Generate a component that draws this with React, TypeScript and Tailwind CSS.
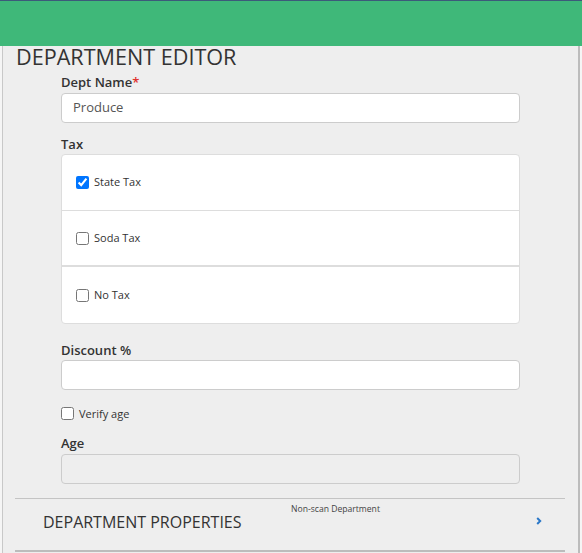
import React from "react";

type TaxOption = { name: string; checked: boolean };

const taxes: TaxOption[] = [
  { name: "State Tax", checked: true },
  { name: "Soda Tax", checked: false },
  { name: "No Tax", checked: false },
];

const labelCls = "block text-[13px] leading-[18px] font-semibold text-[#333]";

export default function App() {
  return (
    <div
      className="flex h-[553px] w-[582px] flex-col overflow-hidden bg-[#f5f5f5]"
      style={{ fontFamily: '"Open Sans", "Liberation Sans", sans-serif' }}
    >
      <div className="h-[46px] shrink-0 border-t border-[#3c5a7a] bg-[#3fb879]" />

      <div className="flex flex-1 px-[2px]">
        <div className="flex-1 border-l border-r-2 border-l-[#c8c8c8] border-r-[#bcbcbc] bg-[#eeeeee]">
          <h1 className="pl-[13px] text-[21.6px] font-normal leading-[22px] text-[#333]">
            DEPARTMENT EDITOR
          </h1>

          <div className="w-[517px] pl-[58px]">
            <label className={`${labelCls} mt-[5px]`}>
              Dept Name<span className="text-[#e0312c]">*</span>
            </label>
            <div className="mt-[2px] flex h-[30px] items-center rounded border border-[#cccccc] bg-white pl-[11px] text-[13px] text-[#555]">
              Produce
            </div>

            <label className={`${labelCls} mt-[12px]`}>Tax</label>
            <div className="mt-[1px] rounded border border-[#dddddd] bg-white">
              {taxes.map((t, i) => (
                <div
                  key={t.name}
                  className={`flex h-[56px] items-center gap-[5px] pl-[14px] ${
                    i === 0
                      ? "border-b border-[#dddddd]"
                      : i === 1
                        ? "border-b-2 border-[#dddddd]"
                        : ""
                  }`}
                >
                  <input
                    type="checkbox"
                    defaultChecked={t.checked}
                    className="m-0 h-[13px] w-[13px]"
                  />
                  <span className="text-[11px] text-[#333]">{t.name}</span>
                </div>
              ))}
            </div>

            <label className={`${labelCls} mt-[17px]`}>Discount %</label>
            <div className="mt-[1px] h-[30px] rounded border border-[#cccccc] bg-white" />

            <div className="mt-[17px] flex h-[13px] items-center gap-[5px]">
              <input type="checkbox" className="m-0 h-[13px] w-[13px]" />
              <span className="text-[11px] leading-[13px] text-[#333]">Verify age</span>
            </div>

            <label className={`${labelCls} mt-[14px]`}>Age</label>
            <div className="mt-[2px] h-[30px] rounded border border-[#cccccc] bg-[#eeeeee]" />
          </div>

          <div className="ml-[12px] mt-[14px] flex h-[54px] w-[550px] items-center border-t border-b-2 border-t-[#c4c4c4] border-b-[#bcbcbc] pl-[28px] pr-[23px]">
            <span className="mb-[5px] w-[248px] text-[16px] leading-[16px] text-[#333]">
              DEPARTMENT PROPERTIES
            </span>
            <span className="mt-[6px] flex-1 self-start text-[8.6px] leading-[9px] text-[#444]">
              Non-scan Department
            </span>
            <svg
              width="6"
              height="8"
              viewBox="0 0 6 8"
              className="mb-[8px]"
              aria-hidden
            >
              <path
                d="M1.2 1 L4.2 4 L1.2 7"
                fill="none"
                stroke="#2b78c8"
                strokeWidth="2"
              />
            </svg>
          </div>
        </div>
      </div>
    </div>
  );
}
